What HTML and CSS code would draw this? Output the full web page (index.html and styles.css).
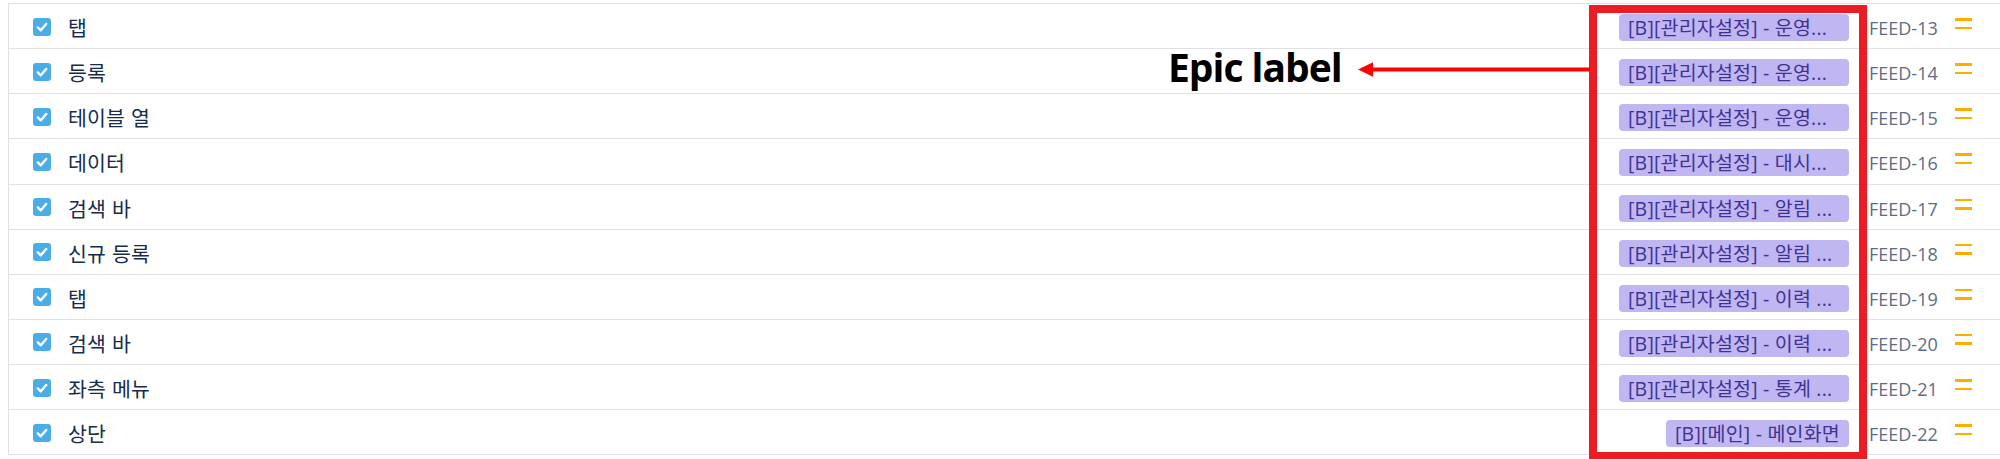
FILE: index.html
```html
<!DOCTYPE html>
<html lang="ko">
<head>
<meta charset="utf-8">
<title>Backlog</title>
<link rel="stylesheet" href="styles.css">
</head>
<body>
<div class="page">
  <div class="list">
    <div class="row"><span class="cb"><svg viewBox="0 0 18 18" width="18" height="18"><path d="M4.8 9.4 L7.8 12.3 L13.2 6" fill="none" stroke="#fff" stroke-width="2.4" stroke-linecap="round" stroke-linejoin="round"/></svg></span><span class="summary">탭</span><span class="epic trunc">[B][관리자설정] - 운영...</span><span class="key">FEED-13</span><span class="prio"><i></i><i></i></span></div>
    <div class="row"><span class="cb"><svg viewBox="0 0 18 18" width="18" height="18"><path d="M4.8 9.4 L7.8 12.3 L13.2 6" fill="none" stroke="#fff" stroke-width="2.4" stroke-linecap="round" stroke-linejoin="round"/></svg></span><span class="summary">등록</span><span class="epic trunc">[B][관리자설정] - 운영...</span><span class="key">FEED-14</span><span class="prio"><i></i><i></i></span></div>
    <div class="row"><span class="cb"><svg viewBox="0 0 18 18" width="18" height="18"><path d="M4.8 9.4 L7.8 12.3 L13.2 6" fill="none" stroke="#fff" stroke-width="2.4" stroke-linecap="round" stroke-linejoin="round"/></svg></span><span class="summary">테이블 열</span><span class="epic trunc">[B][관리자설정] - 운영...</span><span class="key">FEED-15</span><span class="prio"><i></i><i></i></span></div>
    <div class="row"><span class="cb"><svg viewBox="0 0 18 18" width="18" height="18"><path d="M4.8 9.4 L7.8 12.3 L13.2 6" fill="none" stroke="#fff" stroke-width="2.4" stroke-linecap="round" stroke-linejoin="round"/></svg></span><span class="summary">데이터</span><span class="epic trunc">[B][관리자설정] - 대시...</span><span class="key">FEED-16</span><span class="prio"><i></i><i></i></span></div>
    <div class="row"><span class="cb"><svg viewBox="0 0 18 18" width="18" height="18"><path d="M4.8 9.4 L7.8 12.3 L13.2 6" fill="none" stroke="#fff" stroke-width="2.4" stroke-linecap="round" stroke-linejoin="round"/></svg></span><span class="summary">검색 바</span><span class="epic trunc">[B][관리자설정] - 알림 ...</span><span class="key">FEED-17</span><span class="prio"><i></i><i></i></span></div>
    <div class="row"><span class="cb"><svg viewBox="0 0 18 18" width="18" height="18"><path d="M4.8 9.4 L7.8 12.3 L13.2 6" fill="none" stroke="#fff" stroke-width="2.4" stroke-linecap="round" stroke-linejoin="round"/></svg></span><span class="summary">신규 등록</span><span class="epic trunc">[B][관리자설정] - 알림 ...</span><span class="key">FEED-18</span><span class="prio"><i></i><i></i></span></div>
    <div class="row"><span class="cb"><svg viewBox="0 0 18 18" width="18" height="18"><path d="M4.8 9.4 L7.8 12.3 L13.2 6" fill="none" stroke="#fff" stroke-width="2.4" stroke-linecap="round" stroke-linejoin="round"/></svg></span><span class="summary">탭</span><span class="epic trunc">[B][관리자설정] - 이력 ...</span><span class="key">FEED-19</span><span class="prio"><i></i><i></i></span></div>
    <div class="row"><span class="cb"><svg viewBox="0 0 18 18" width="18" height="18"><path d="M4.8 9.4 L7.8 12.3 L13.2 6" fill="none" stroke="#fff" stroke-width="2.4" stroke-linecap="round" stroke-linejoin="round"/></svg></span><span class="summary">검색 바</span><span class="epic trunc">[B][관리자설정] - 이력 ...</span><span class="key">FEED-20</span><span class="prio"><i></i><i></i></span></div>
    <div class="row"><span class="cb"><svg viewBox="0 0 18 18" width="18" height="18"><path d="M4.8 9.4 L7.8 12.3 L13.2 6" fill="none" stroke="#fff" stroke-width="2.4" stroke-linecap="round" stroke-linejoin="round"/></svg></span><span class="summary">좌측 메뉴</span><span class="epic trunc">[B][관리자설정] - 통계 ...</span><span class="key">FEED-21</span><span class="prio"><i></i><i></i></span></div>
    <div class="row"><span class="cb"><svg viewBox="0 0 18 18" width="18" height="18"><path d="M4.8 9.4 L7.8 12.3 L13.2 6" fill="none" stroke="#fff" stroke-width="2.4" stroke-linecap="round" stroke-linejoin="round"/></svg></span><span class="summary">상단</span><span class="epic">[B][메인] - 메인화면</span><span class="key">FEED-22</span><span class="prio"><i></i><i></i></span></div>
  </div>

  <div class="annot-box"></div>
  <div class="annot-text">Epic label</div>
  <svg class="annot-arrow" width="232" height="20" viewBox="0 0 232 20"><polygon points="0,9.5 15,2.3 15,16.7" fill="#ff0000"/><rect x="14" y="7.5" width="218" height="4" fill="#ff0000"/></svg>
</div>
</body>
</html>
```

FILE: styles.css
```css
html, body {
  margin: 0;
  padding: 0;
  background: #ffffff;
}

body {
  font-family: "Open Sans", "Noto Sans CJK KR", sans-serif;
  font-size: 17.5px;
  color: #172b4d;
  overflow: hidden;
}

.page {
  position: relative;
  width: 2000px;
  height: 459px;
  padding: 3px 0 0 8px;
  box-sizing: border-box;
}

.list {
  border-top: 1px solid #dfe1e6;
  border-left: 1px solid #dfe1e6;
}

.row {
  display: flex;
  align-items: center;
  height: 45.13px;
  box-sizing: border-box;
  border-bottom: 1px solid #dfe1e6;
  padding: 1px 28px 0 24px;
}

.cb {
  width: 18px;
  height: 18px;
  border-radius: 3px;
  background: #4bade8;
  flex: none;
  margin-right: 17px;
  display: flex;
}

.summary {
  flex: 1;
  white-space: nowrap;
  font-family: "Noto Sans CJK KR", sans-serif;
  font-size: 20.5px;
  letter-spacing: 0.2px;
  color: #172b4d;
  margin-top: 1px;
}

.epic {
  flex: none;
  height: 27px;
  line-height: 27px;
  padding: 0 9px;
  border-radius: 4px;
  background: #c0b6f2;
  color: #403294;
  font-size: 19.5px;
  letter-spacing: 0.2px;
  white-space: nowrap;
  margin-right: 20px;
  margin-top: 2px;
  box-sizing: border-box;
}

.epic.trunc {
  width: 230px;
}

.key {
  flex: none;
  width: 69px;
  margin-right: 17px;
  color: #5e6c84;
  font-size: 18px;
  white-space: nowrap;
  margin-top: 3px;
}

.prio {
  flex: none;
  width: 17px;
  height: 11px;
  display: flex;
  flex-direction: column;
  justify-content: space-between;
  margin-bottom: 6px;
}

.prio i {
  display: block;
  height: 2.5px;
  background: #ffab00;
}

.annot-box {
  position: absolute;
  left: 1589px;
  top: 5px;
  width: 278px;
  height: 455px;
  border: 8px solid #ed1c24;
  box-sizing: border-box;
}

.annot-text {
  position: absolute;
  left: 1168px;
  top: 47px;
  font-family: "Open Sans", sans-serif;
  font-weight: 700;
  font-size: 39px;
  line-height: 40px;
  letter-spacing: -1px;
  color: #000000;
  white-space: nowrap;
}

.annot-arrow {
  position: absolute;
  left: 1358px;
  top: 60px;
}
```
